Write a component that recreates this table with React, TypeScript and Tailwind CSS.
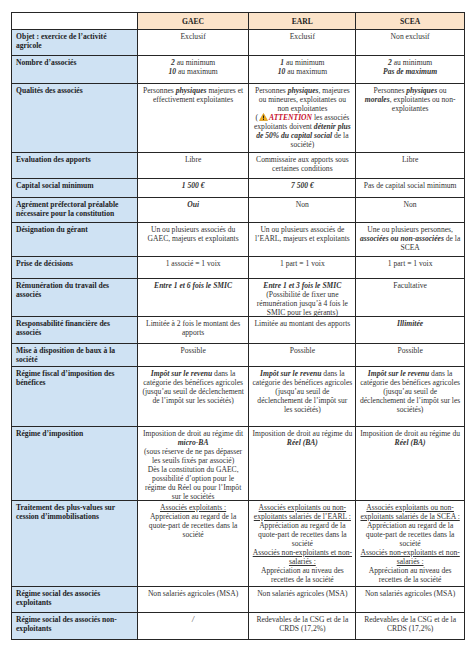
import React from 'react';

type Row = {
  label: React.ReactNode;
  cells: React.ReactNode[];
  h: string;
};

function BI({ children }: { children: React.ReactNode }) {
  return <b className="italic font-bold">{children}</b>;
}

function U({ children }: { children: React.ReactNode }) {
  return <span className="underline">{children}</span>;
}

function Warn() {
  return (
    <svg width="9" height="8" viewBox="0 0 18 16" className="inline-block align-[-1px] mx-[1px]">
      <path d="M9 1 L17 15 L1 15 Z" fill="#f2b01e" stroke="#d08a00" strokeWidth="1.2" strokeLinejoin="round" />
      <rect x="8" y="5" width="2" height="6" fill="#222" />
      <rect x="8" y="12" width="2" height="2" fill="#222" />
    </svg>
  );
}

const rows: Row[] = [
  {
    label: 'Objet : exercice de l’activité agricole',
    cells: ['Exclusif', 'Exclusif', 'Non exclusif'],
    h: 'h-[26px]',
  },
  {
    label: 'Nombre d’associés',
    cells: [
      <>
        <BI>2</BI> au minimum
        <br />
        <BI>10</BI> au maximum
      </>,
      <>
        <BI>1</BI> au minimum
        <br />
        <BI>10</BI> au maximum
      </>,
      <>
        <BI>2</BI> au minimum
        <br />
        <BI>Pas de maximum</BI>
      </>,
    ],
    h: 'h-[28px]',
  },
  {
    label: 'Qualités des associés',
    cells: [
      <>
        Personnes <BI>physiques</BI> majeures et
        <br />
        effectivement exploitantes
      </>,
      <>
        Personnes <BI>physiques</BI>, majeures
        <br />
        ou mineures, exploitantes ou
        <br />
        non exploitantes
        <br />(
        <Warn />
        <b className="italic font-bold text-[#c8102e]">ATTENTION</b> les associés
        <br />
        exploitants doivent <BI>détenir plus</BI>
        <br />
        <BI>de 50% du capital social</BI> de la
        <br />
        société)
      </>,
      <>
        Personnes <BI>physiques</BI> ou
        <br />
        <BI>morales</BI>, exploitantes ou non-
        <br />
        exploitantes
      </>,
    ],
    h: 'h-[69px]',
  },
  {
    label: 'Evaluation des apports',
    cells: [
      'Libre',
      <>
        Commissaire aux apports sous
        <br />
        certaines conditions
      </>,
      'Libre',
    ],
    h: 'h-[26px]',
  },
  {
    label: 'Capital social minimum',
    cells: [<BI>1 500 €</BI>, <BI>7 500 €</BI>, 'Pas de capital social minimum'],
    h: 'h-[19px]',
  },
  {
    label: 'Agrément préfectoral préalable nécessaire pour la constitution',
    cells: [<BI>Oui</BI>, 'Non', 'Non'],
    h: 'h-[25px]',
  },
  {
    label: 'Désignation du gérant',
    cells: [
      <>
        Un ou plusieurs associés du
        <br />
        GAEC, majeurs et exploitants
      </>,
      <>
        Un ou plusieurs associés de
        <br />
        l’EARL, majeurs et exploitants
      </>,
      <>
        Une ou plusieurs personnes,
        <br />
        <BI>associées ou non-associées</BI> de la
        <br />
        SCEA
      </>,
    ],
    h: 'h-[34px]',
  },
  {
    label: 'Prise de décisions',
    cells: ['1 associé = 1 voix', '1 part = 1 voix', '1 part = 1 voix'],
    h: 'h-[22px]',
  },
  {
    label: 'Rémunération du travail des associés',
    cells: [
      <BI>Entre 1 et 6 fois le SMIC</BI>,
      <>
        <BI>Entre 1 et 3 fois le SMIC</BI>
        <br />
        (Possibilité de fixer une
        <br />
        rémunération jusqu’à 4 fois le
        <br />
        SMIC pour les gérants)
      </>,
      'Facultative',
    ],
    h: 'h-[38px]',
  },
  {
    label: 'Responsabilité financière des associés',
    cells: [
      <>
        Limitée à 2 fois le montant des
        <br />
        apports
      </>,
      'Limitée au montant des apports',
      <BI>Illimitée</BI>,
    ],
    h: 'h-[27px]',
  },
  {
    label: 'Mise à disposition de baux à la société',
    cells: ['Possible', 'Possible', 'Possible'],
    h: 'h-[23px]',
  },
  {
    label: 'Régime fiscal d’imposition des bénéfices',
    cells: [
      <>
        <BI>Impôt sur le revenu</BI> dans la
        <br />
        catégorie des bénéfices agricoles
        <br />
        (jusqu’au seuil de déclenchement
        <br />
        de l’impôt sur les sociétés)
      </>,
      <>
        <BI>Impôt sur le revenu</BI> dans la
        <br />
        catégorie des bénéfices agricoles
        <br />
        (jusqu’au seuil de
        <br />
        déclenchement de l’impôt sur
        <br />
        les sociétés)
      </>,
      <>
        <BI>Impôt sur le revenu</BI> dans la
        <br />
        catégorie des bénéfices agricoles
        <br />
        (jusqu’au seuil de
        <br />
        déclenchement de l’impôt sur les
        <br />
        sociétés)
      </>,
    ],
    h: 'h-[60px]',
  },
  {
    label: 'Régime d’imposition',
    cells: [
      <>
        Imposition de droit au régime dit
        <br />
        <BI>micro-BA</BI>
        <br />
        (sous réserve de ne pas dépasser
        <br />
        les seuils fixés par associé)
        <br />
        Dès la constitution du GAEC,
        <br />
        possibilité d’option pour le
        <br />
        régime du Réel ou pour l’Impôt
        <br />
        sur le sociétés
      </>,
      <>
        Imposition de droit au régime du
        <br />
        <BI>Réel (BA)</BI>
      </>,
      <>
        Imposition de droit au régime du
        <br />
        <BI>Réel (BA)</BI>
      </>,
    ],
    h: 'h-[74px]',
  },
  {
    label: 'Traitement des plus-values sur cession d’immobilisations',
    cells: [
      <>
        <U>Associés exploitants :</U>
        <br />
        Appréciation au regard de la
        <br />
        quote-part de recettes dans la
        <br />
        société
      </>,
      <>
        <U>Associés exploitants ou non-</U>
        <br />
        <U>exploitants salariés de l’EARL :</U>
        <br />
        Appréciation au regard de la
        <br />
        quote-part de recettes dans la
        <br />
        société
        <br />
        <U>Associés non-exploitants et non-</U>
        <br />
        <U>salariés :</U>
        <br />
        Appréciation au niveau des
        <br />
        recettes de la société
      </>,
      <>
        <U>Associés exploitants ou non-</U>
        <br />
        <U>exploitants salariés de la SCEA :</U>
        <br />
        Appréciation au regard de la
        <br />
        quote-part de recettes dans la
        <br />
        société
        <br />
        <U>Associés non-exploitants et non-</U>
        <br />
        <U>salariés :</U>
        <br />
        Appréciation au niveau des
        <br />
        recettes de la société
      </>,
    ],
    h: 'h-[86px]',
  },
  {
    label: 'Régime social des associés exploitants',
    cells: ['Non salariés agricoles (MSA)', 'Non salariés agricoles (MSA)', 'Non salariés agricoles (MSA)'],
    h: 'h-[26px]',
  },
  {
    label: 'Régime social des associés non-exploitants',
    cells: [
      <span className="italic">/</span>,
      <>
        Redevables de la CSG et de la
        <br />
        CRDS (17,2%)
      </>,
      <>
        Redevables de la CSG et de la
        <br />
        CRDS (17,2%)
      </>,
    ],
    h: 'h-[27px]',
  },
];

const widths = ['w-[112px]', 'w-[107px]', 'w-[109px]'];

export default function App() {
  return (
    <div className="min-h-[669px] w-[474px] bg-white pt-[12px] pl-[11px] font-['Liberation_Serif','Times_New_Roman',serif] text-[7.6px] leading-[9px] text-[#333]">
      <div className="flex w-[454px] flex-col border-t border-l border-[#262626]">
        <div className="flex h-[17px]">
          <div className="w-[126px] border-r border-b border-[#262626] bg-white" />
          {['GAEC', 'EARL', 'SCEA'].map((t, i) => (
            <div
              key={t}
              className={`${widths[i]} flex items-center justify-center border-r border-b border-[#262626] bg-[#fbe3c9] font-bold text-[#1e1e1e]`}
            >
              {t}
            </div>
          ))}
        </div>
        {rows.map((r, ri) => (
          <div key={ri} className={`flex ${r.h}`}>
            <div className="w-[126px] border-r border-b border-[#262626] bg-[#cfe2f3] px-[4px] pt-[2px] font-bold text-[#1c1c24]">
              {r.label}
            </div>
            {r.cells.map((c, ci) => (
              <div
                key={ci}
                className={`${widths[ci]} whitespace-nowrap border-r border-b border-[#262626] pt-[2px] text-center`}
              >
                {c}
              </div>
            ))}
          </div>
        ))}
      </div>
    </div>
  );
}
